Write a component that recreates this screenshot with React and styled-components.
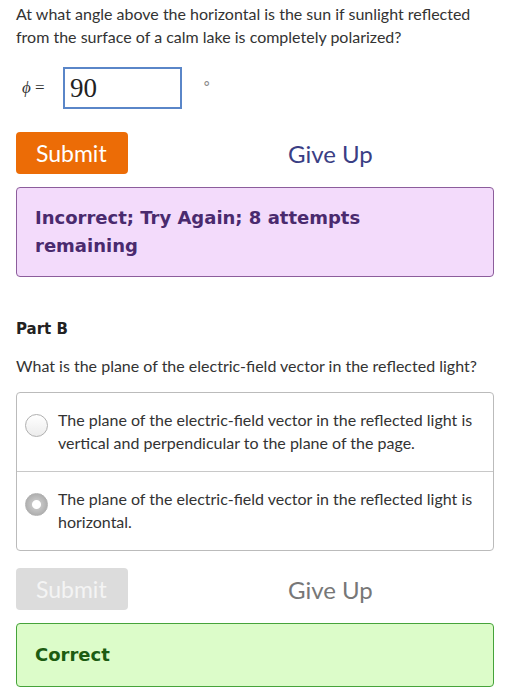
import React from "react";
import styled, { createGlobalStyle } from "styled-components";

const GlobalStyle = createGlobalStyle`
  body {
    margin: 0;
    background: #fff;
    font-family: "Lato", "Open Sans", sans-serif;
    color: #333;
  }
`;

const Page = styled.div`
  width: 478px;
  padding: 2px 16px 0;
`;

const Question = styled.p`
  margin: 0;
  font-size: 16px;
  line-height: 23px;
  color: #333;
`;

const AnswerRow = styled.div`
  display: flex;
  align-items: center;
  margin-top: 19px;
  padding-left: 6px;
`;

const Label = styled.span`
  font-size: 17px;
  color: #333;
  width: 41px;
  font-family: "Liberation Serif", serif;
`;

const InputBox = styled.div`
  width: 110px;
  height: 38px;
  border: 2px solid #5a86c8;
  display: flex;
  align-items: center;
  padding-left: 5px;
  font-family: "Liberation Serif", serif;
  font-size: 27px;
  color: #222;
`;

const Unit = styled.span`
  margin-left: 20px;
  margin-top: -12px;
  font-size: 15px;
  color: #888;
`;

const ButtonRow = styled.div`
  display: flex;
  align-items: center;
  margin-top: ${(p) => p.top}px;
`;

const SubmitButton = styled.div`
  width: 112px;
  height: 42px;
  border-radius: 4px;
  background: ${(p) => (p.disabled ? "#dcdcdc" : "#ec6c06")};
  color: ${(p) => (p.disabled ? "#f4f4f4" : "#fff")};
  font-size: 23px;
  display: flex;
  align-items: center;
  padding-left: 20px;
  box-sizing: border-box;
`;

const GiveUp = styled.span`
  margin-left: 160px;
  font-size: 24px;
  color: ${(p) => (p.disabled ? "#777" : "#3a3e84")};
`;

const Feedback = styled.div`
  margin-top: 13px;
  border: 1px solid ${(p) => p.border};
  background: ${(p) => p.bg};
  color: ${(p) => p.fg};
  border-radius: 4px;
  padding: ${(p) => p.pad};
  font-family: "DejaVu Sans", "Lato", sans-serif;
  font-size: 18px;
  font-weight: 700;
  line-height: 28px;
`;

const PartTitle = styled.h3`
  margin: 43px 0 0;
  font-family: "DejaVu Sans", "Lato", sans-serif;
  font-size: 15px;
  font-weight: 700;
  color: #222;
`;

const SubQuestion = styled.p`
  margin: 18px 0 0;
  font-size: 16px;
  color: #333;
`;

const Options = styled.div`
  margin-top: 17px;
  border: 1px solid #bbb;
  border-radius: 4px;
`;

const Option = styled.div`
  display: flex;
  align-items: flex-start;
  padding: 15px 10px 17px 8px;
  border-top: ${(p) => (p.first ? "none" : "1px solid #c8c8c8")};
`;

const Radio = styled.span`
  flex: none;
  width: 23px;
  height: 23px;
  border-radius: 50%;
  margin-top: 6px;
  margin-right: 10px;
  box-sizing: border-box;
  border: 1px solid #b0b0b0;
  background: ${(p) =>
    p.checked
      ? "radial-gradient(circle, #fff 0 4px, #c4c4c4 5px, #a0a0a0 100%)"
      : "linear-gradient(#fff, #ececec)"};
`;

const OptionText = styled.span`
  font-size: 16px;
  line-height: 23px;
  color: #333;
`;

export default function App() {
  return (
    <>
      <GlobalStyle />
      <Page>
        <Question>
          At what angle above the horizontal is the sun if sunlight reflected
          from the surface of a calm lake is completely polarized?
        </Question>
        <AnswerRow>
          <Label>
            <i>ϕ</i> =
          </Label>
          <InputBox>90</InputBox>
          <Unit>∘</Unit>
        </AnswerRow>
        <ButtonRow top={23}>
          <SubmitButton>Submit</SubmitButton>
          <GiveUp>Give Up</GiveUp>
        </ButtonRow>
        <Feedback border="#8c5d9c" bg="#f3dbfb" fg="#4a2a6e" pad="16px 70px 16px 18px">
          Incorrect; Try Again; 8 attempts remaining
        </Feedback>
        <PartTitle>Part B</PartTitle>
        <SubQuestion>
          What is the plane of the electric-field vector in the reflected light?
        </SubQuestion>
        <Options>
          <Option first>
            <Radio />
            <OptionText>
              The plane of the electric-field vector in the reflected light is
              vertical and perpendicular to the plane of the page.
            </OptionText>
          </Option>
          <Option>
            <Radio checked />
            <OptionText>
              The plane of the electric-field vector in the reflected light is
              horizontal.
            </OptionText>
          </Option>
        </Options>
        <ButtonRow top={17}>
          <SubmitButton disabled>Submit</SubmitButton>
          <GiveUp disabled>Give Up</GiveUp>
        </ButtonRow>
        <Feedback border="#46a33a" bg="#dcfcc9" fg="#1c5c12" pad="17px 18px 17px">
          Correct
        </Feedback>
      </Page>
    </>
  );
}
